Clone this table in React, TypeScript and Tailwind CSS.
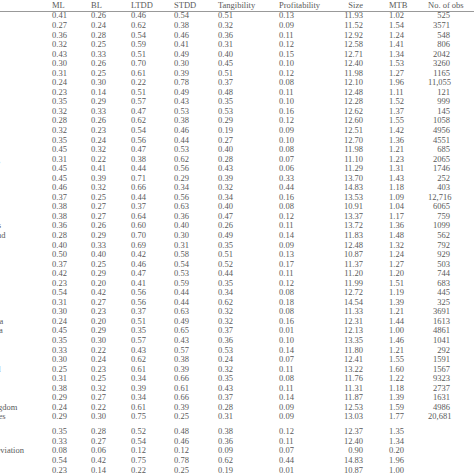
import React from "react";

// ML, BL, LTDD, STDD, Tangibility, Profitability, Size, MTB, No. of obs
const countries: [string, string[]][] = [
  ["Argentina", ["0.41", "0.26", "0.46", "0.54", "0.51", "0.13", "11.93", "1.02", "525"]],
  ["Australia", ["0.27", "0.24", "0.62", "0.38", "0.32", "0.09", "11.52", "1.54", "3571"]],
  ["Austria", ["0.36", "0.28", "0.54", "0.46", "0.36", "0.11", "12.92", "1.24", "548"]],
  ["Belgium", ["0.32", "0.25", "0.59", "0.41", "0.31", "0.12", "12.58", "1.41", "806"]],
  ["Brazil", ["0.43", "0.33", "0.51", "0.49", "0.40", "0.15", "12.71", "1.34", "2042"]],
  ["Canada", ["0.30", "0.26", "0.70", "0.30", "0.45", "0.10", "12.40", "1.53", "3260"]],
  ["Chile", ["0.31", "0.25", "0.61", "0.39", "0.51", "0.12", "11.98", "1.27", "1165"]],
  ["China", ["0.24", "0.30", "0.22", "0.78", "0.37", "0.08", "12.10", "1.96", "11,055"]],
  ["Colombia", ["0.23", "0.14", "0.51", "0.49", "0.48", "0.11", "12.48", "1.11", "121"]],
  ["Denmark", ["0.35", "0.29", "0.57", "0.43", "0.35", "0.10", "12.28", "1.52", "999"]],
  ["Egypt", ["0.32", "0.33", "0.47", "0.53", "0.53", "0.16", "12.62", "1.37", "145"]],
  ["Finland", ["0.28", "0.26", "0.62", "0.38", "0.29", "0.12", "12.60", "1.55", "1058"]],
  ["France", ["0.32", "0.23", "0.54", "0.46", "0.19", "0.09", "12.51", "1.42", "4956"]],
  ["Germany", ["0.35", "0.24", "0.56", "0.44", "0.27", "0.10", "12.70", "1.36", "4551"]],
  ["Greece", ["0.45", "0.32", "0.47", "0.53", "0.40", "0.08", "11.98", "1.21", "685"]],
  ["Hong Kong", ["0.31", "0.22", "0.38", "0.62", "0.28", "0.07", "11.10", "1.23", "2065"]],
  ["India", ["0.45", "0.41", "0.44", "0.56", "0.43", "0.06", "11.29", "1.31", "1746"]],
  ["Ireland", ["0.45", "0.39", "0.71", "0.29", "0.39", "0.33", "13.70", "1.43", "252"]],
  ["Israel", ["0.46", "0.32", "0.66", "0.34", "0.32", "0.44", "14.83", "1.18", "403"]],
  ["Japan", ["0.37", "0.25", "0.44", "0.56", "0.34", "0.16", "13.53", "1.09", "12,716"]],
  ["Malaysia", ["0.38", "0.27", "0.37", "0.63", "0.40", "0.08", "10.91", "1.04", "6065"]],
  ["Mexico", ["0.38", "0.27", "0.64", "0.36", "0.47", "0.12", "13.37", "1.17", "759"]],
  ["Netherlands", ["0.36", "0.26", "0.60", "0.40", "0.26", "0.11", "13.72", "1.36", "1099"]],
  ["New Zealand", ["0.28", "0.29", "0.70", "0.30", "0.49", "0.14", "11.83", "1.48", "562"]],
  ["Norway", ["0.40", "0.33", "0.69", "0.31", "0.35", "0.09", "12.48", "1.32", "792"]],
  ["Pakistan", ["0.50", "0.40", "0.42", "0.58", "0.51", "0.13", "10.87", "1.24", "929"]],
  ["Peru", ["0.37", "0.25", "0.46", "0.54", "0.52", "0.17", "11.37", "1.27", "503"]],
  ["Philippines", ["0.42", "0.29", "0.47", "0.53", "0.44", "0.11", "11.20", "1.20", "744"]],
  ["Poland", ["0.23", "0.20", "0.41", "0.59", "0.35", "0.12", "11.99", "1.51", "683"]],
  ["Portugal", ["0.54", "0.42", "0.56", "0.44", "0.34", "0.08", "12.72", "1.19", "445"]],
  ["Russia", ["0.31", "0.27", "0.56", "0.44", "0.62", "0.18", "14.54", "1.39", "325"]],
  ["Singapore", ["0.30", "0.23", "0.37", "0.63", "0.32", "0.08", "11.33", "1.21", "3691"]],
  ["South Africa", ["0.24", "0.20", "0.51", "0.49", "0.32", "0.16", "12.31", "1.44", "1613"]],
  ["South Korea", ["0.45", "0.29", "0.35", "0.65", "0.37", "0.01", "12.13", "1.00", "4861"]],
  ["Spain", ["0.35", "0.30", "0.57", "0.43", "0.36", "0.10", "13.35", "1.46", "1041"]],
  ["Sri Lanka", ["0.33", "0.22", "0.43", "0.57", "0.53", "0.14", "11.80", "1.21", "292"]],
  ["Sweden", ["0.30", "0.24", "0.62", "0.38", "0.24", "0.07", "12.41", "1.55", "1591"]],
  ["Switzerland", ["0.25", "0.23", "0.61", "0.39", "0.32", "0.11", "13.22", "1.60", "1567"]],
  ["Taiwan", ["0.31", "0.25", "0.34", "0.66", "0.35", "0.08", "11.76", "1.22", "9323"]],
  ["Thailand", ["0.38", "0.32", "0.39", "0.61", "0.43", "0.11", "11.31", "1.18", "2737"]],
  ["Turkey", ["0.29", "0.27", "0.34", "0.66", "0.37", "0.14", "11.87", "1.39", "1631"]],
  ["United Kingdom", ["0.24", "0.22", "0.61", "0.39", "0.28", "0.09", "12.53", "1.59", "4986"]],
  ["United States", ["0.29", "0.30", "0.75", "0.25", "0.31", "0.09", "13.03", "1.77", "20,681"]],
];

const summary: [string, string[]][] = [
  ["Mean", ["0.35", "0.28", "0.52", "0.48", "0.38", "0.12", "12.37", "1.35", ""]],
  ["Median", ["0.33", "0.27", "0.54", "0.46", "0.36", "0.11", "12.40", "1.34", ""]],
  ["Standard deviation", ["0.08", "0.06", "0.12", "0.12", "0.09", "0.07", "0.90", "0.20", ""]],
  ["Maximum", ["0.54", "0.42", "0.75", "0.78", "0.62", "0.44", "14.83", "1.96", ""]],
  ["Minimum", ["0.23", "0.14", "0.22", "0.25", "0.19", "0.01", "10.87", "1.00", ""]],
];

function Row({ label, v, h }: { label: string; v: string[]; h: string }) {
  return (
    <div className={`flex items-center whitespace-nowrap ${h}`}>
      <div className="w-[92px] shrink-0">{label}</div>
      <div className="w-[39px] shrink-0">{v[0]}</div>
      <div className="w-[40px] shrink-0">{v[1]}</div>
      <div className="w-[43px] shrink-0">{v[2]}</div>
      <div className="w-[44px] shrink-0">{v[3]}</div>
      <div className="w-[61px] shrink-0">{v[4]}</div>
      <div className="w-[51px] shrink-0">{v[5]}</div>
      <div className="w-[33px] shrink-0 text-right">{v[6]}</div>
      <div className="w-[26px] shrink-0" />
      <div className="w-[39px] shrink-0">{v[7]}</div>
      <div className="w-[22px] shrink-0 text-right">{v[8]}</div>
    </div>
  );
}

export default function App() {
  return (
    <div
      className="w-[474px] h-[474px] overflow-hidden bg-white text-[8.5px] text-[#5a5a5a]"
      style={{ fontFamily: '"Liberation Serif", serif' }}
    >
      <div className="w-[560px] -ml-[40px]">
        <div className="flex items-start whitespace-nowrap h-[12px] border-b border-[#999] leading-[10px]">
          <div className="w-[92px] shrink-0">Country</div>
          <div className="w-[39px] shrink-0">ML</div>
          <div className="w-[40px] shrink-0">BL</div>
          <div className="w-[43px] shrink-0">LTDD</div>
          <div className="w-[44px] shrink-0">STDD</div>
          <div className="w-[61px] shrink-0">Tangibility</div>
          <div className="w-[51px] shrink-0">Profitability</div>
          <div className="w-[33px] shrink-0 text-right">Size</div>
          <div className="w-[26px] shrink-0" />
          <div className="w-[39px] shrink-0">MTB</div>
          <div className="shrink-0">No. of obs</div>
        </div>
        <div className="-mt-[1px]">
          {countries.map(([c, v]) => (
            <Row key={c} label={c} v={v} h="h-[9.55px]" />
          ))}
        </div>
        <div className="mt-[5px]">
          {summary.map(([c, v]) => (
            <Row key={c} label={c} v={v} h="h-[9.7px]" />
          ))}
        </div>
      </div>
    </div>
  );
}
